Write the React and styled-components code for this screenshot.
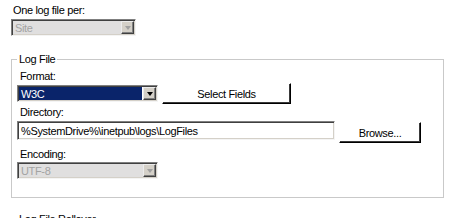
import React from 'react'
import styled, { createGlobalStyle } from 'styled-components'

const GlobalStyle = createGlobalStyle`
  html, body {
    margin: 0;
    padding: 0;
    background: #ffffff;
    overflow: hidden;
  }
  body {
    font-family: 'Liberation Sans', Arial, sans-serif;
    font-size: 11px;
    letter-spacing: -0.35px;
    color: #000000;
  }
`

const Page = styled.div`
  display: flex;
  flex-direction: column;
  align-items: flex-start;
  padding: 4px 0 0 11px;
  width: 433px;
`

const Label = styled.div`
  line-height: 13px;
  height: 13px;
  margin-left: ${(p) => p.$indent || 2}px;
  margin-top: ${(p) => p.$top || 0}px;
  white-space: nowrap;
`

const Group = styled.fieldset`
  margin: ${(p) => p.$top || 0}px 0 0 0;
  padding: 4px 5px ${(p) => p.$bottom || 0}px 5px;
  border: 1px solid #c9c9c9;
  width: 433px;
  box-sizing: border-box;
  display: flex;
  flex-direction: column;
  align-items: flex-start;
  min-width: 0;
`

const Legend = styled.legend`
  padding: 0 2px;
  line-height: 13px;
  height: 13px;
`

const Row = styled.div`
  display: flex;
  align-items: flex-start;
  gap: 4px;
`

const ComboBox = styled.div`
  display: flex;
  box-sizing: border-box;
  width: ${(p) => p.$width}px;
  height: ${(p) => p.$height || 17}px;
  margin-top: ${(p) => p.$top || 0}px;
  border: 1px solid;
  border-color: #7f7f7f #f4f4f4 #f4f4f4 #7f7f7f;
  box-shadow: inset 1px 1px 0 #404040, inset -1px -1px 0 #d4d0c8;
  background: ${(p) => (p.$disabled ? '#e0dfdf' : '#ffffff')};
  padding: 1px;
`

const ComboText = styled.div`
  flex: 1;
  display: flex;
  align-items: center;
  padding-left: 2px;
  margin-right: 1px;
  color: ${(p) => (p.$disabled ? '#a3a3a3' : p.$selected ? '#ffffff' : '#000000')};
  background: ${(p) => (p.$selected ? '#0a246a' : 'transparent')};
  white-space: nowrap;
  overflow: hidden;
`

const DropButton = styled.div`
  width: 13px;
  box-sizing: border-box;
  display: flex;
  align-items: center;
  justify-content: center;
  background: #d4d0c8;
  border: 1px solid;
  border-color: #ececec #404040 #404040 #ececec;
  box-shadow: inset -1px -1px 0 #808080;
`

const Arrow = styled.div`
  width: 0;
  height: 0;
  border-left: 3.5px solid transparent;
  border-right: 3.5px solid transparent;
  border-top: 4px solid ${(p) => (p.$disabled ? '#a0a0a0' : '#000000')};
  margin-top: 1px;
`

const TextBox = styled.div`
  box-sizing: border-box;
  width: ${(p) => p.$width}px;
  height: 19px;
  margin-top: ${(p) => p.$top || 0}px;
  border: 1px solid;
  border-color: #7f7f7f #f4f4f4 #f4f4f4 #7f7f7f;
  box-shadow: inset 1px 1px 0 #404040, inset -1px -1px 0 #d4d0c8;
  display: flex;
  align-items: center;
  padding-left: 3px;
  white-space: nowrap;
  overflow: hidden;
`

const Button = styled.button`
  box-sizing: border-box;
  width: ${(p) => p.$width}px;
  height: 21px;
  margin-top: ${(p) => p.$top || 0}px;
  font: inherit;
  letter-spacing: inherit;
  color: #000000;
  background: #ffffff;
  border: 1px solid;
  border-color: #ffffff #000000 #000000 #ffffff;
  box-shadow: inset -1px -1px 0 #3a3a3a;
  padding: 0;
  cursor: default;
`

const Combo = ({ value, width, disabled, selected, top }) => (
  <ComboBox $width={width} $disabled={disabled} $top={top}>
    <ComboText $disabled={disabled} $selected={selected}>{value}</ComboText>
    <DropButton>
      <Arrow $disabled={disabled} />
    </DropButton>
  </ComboBox>
)

export default function App() {
  return (
    <>
      <GlobalStyle />
      <Page>
        <Label>One log file per:</Label>
        <Combo value='Site' width={125} disabled top={2} />

        <Group $top={17} $bottom={18}>
          <Legend>Log File</Legend>
          <Label $indent={3}>Format:</Label>
          <Row>
            <Combo value='W3C' width={141} selected top={2} />
            <Button $width={129}>Select Fields</Button>
          </Row>

          <Label $indent={3} $top={2}>Directory:</Label>
          <Row>
            <TextBox $width={318} $top={2}>%SystemDrive%\inetpub\logs\LogFiles</TextBox>
            <Button $width={82} $top={3}>Browse...</Button>
          </Row>

          <Label $indent={3} $top={5}>Encoding:</Label>
          <Combo value='UTF-8' width={141} disabled top={1} />
        </Group>

        <Group $top={15}>
          <Legend>Log File Rollover</Legend>
        </Group>
      </Page>
    </>
  )
}
